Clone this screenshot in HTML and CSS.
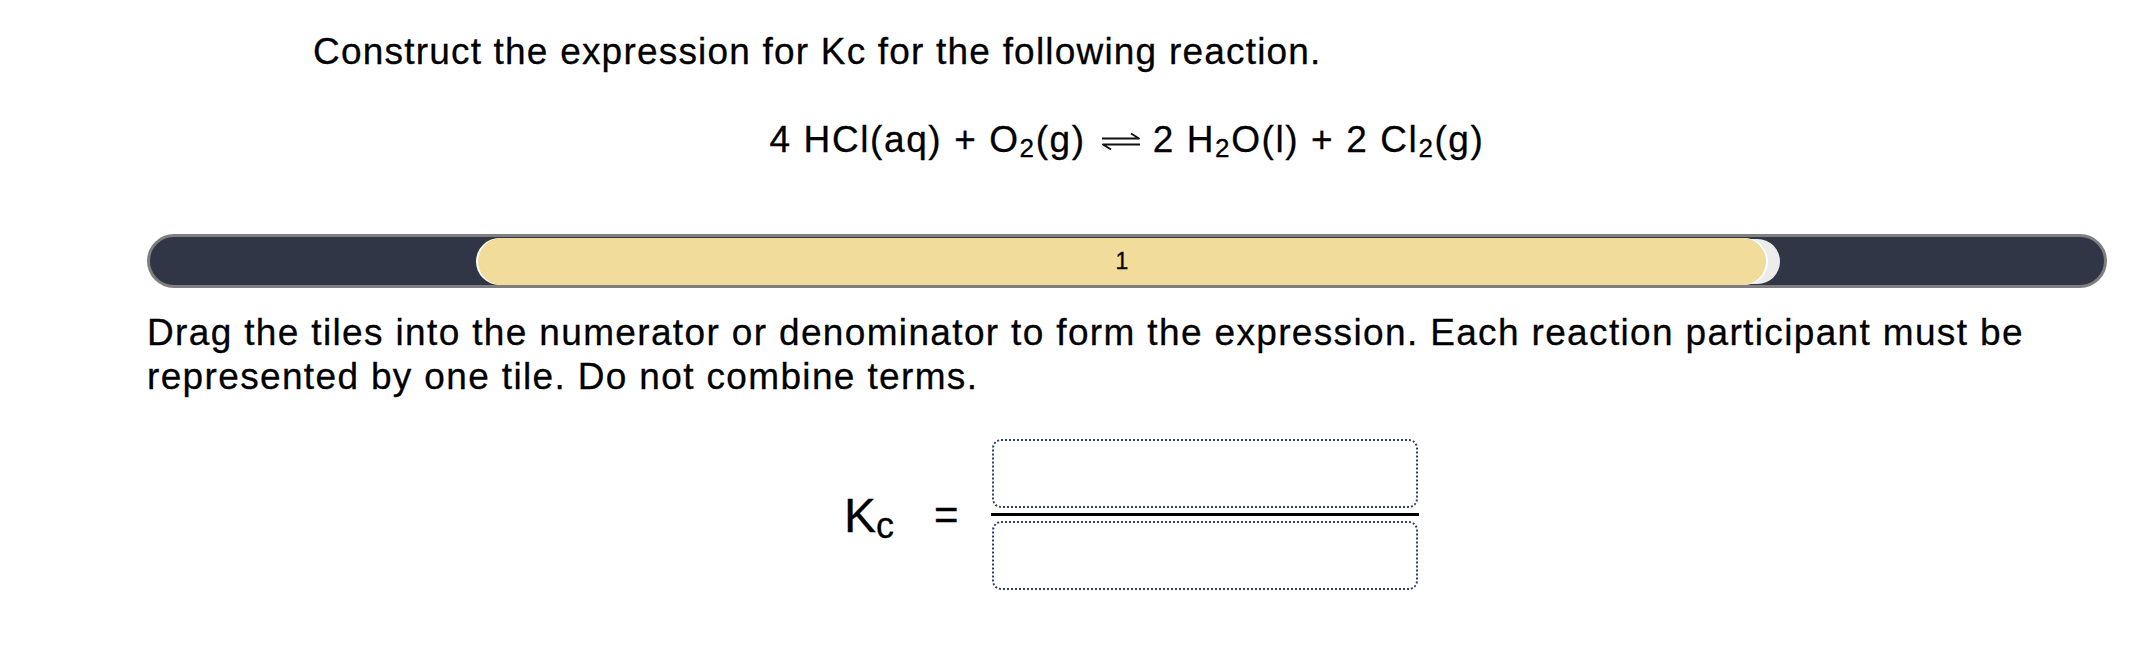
FILE: index.html
```html
<!DOCTYPE html>
<html lang="en">
<head>
<meta charset="utf-8">
<title>Kc expression</title>
<link rel="stylesheet" href="styles.css">
</head>
<body>
<div class="page">
  <p class="title">Construct the expression for Kc for the following reaction.</p>
  <p class="equation">4 HCl(aq) + O<span class="sub">2</span>(g)<svg class="arrow" width="38" height="20" viewBox="0 0 38 20"><path d="M0 7.5H37L29 2.5M38 13.5H1L9 18.5" fill="none" stroke="#111" stroke-width="1.9" stroke-linejoin="round"/></svg>2 H<span class="sub">2</span>O(l) + 2 Cl<span class="sub">2</span>(g)</p>

  <div class="track">
    <div class="slot">1</div>
  </div>

  <p class="instructions">Drag the tiles into the numerator or denominator to form the expression. Each reaction participant must be represented by one tile. Do not combine terms.</p>

  <div class="expr">
    <div class="kc">K<span class="kc-sub">c</span></div>
    <div class="eq">=</div>
    <div class="fraction">
      <div class="dropbox"></div>
      <div class="bar"></div>
      <div class="dropbox"></div>
    </div>
  </div>
</div>
</body>
</html>
```

FILE: styles.css
```css
html, body {
  margin: 0;
  padding: 0;
  background: #ffffff;
}

body {
  font-family: "Liberation Sans", Arial, Helvetica, sans-serif;
  color: #000;
  -webkit-text-stroke: 0.3px #000;
}

.page {
  width: 1960px;
  margin-left: 147px;
  padding-top: 31px;
}

.title,
.equation,
.instructions {
  margin: 0;
  font-size: 37px;
  line-height: 42px;
  letter-spacing: 1.2px;
}

.title {
  margin-left: 166px;
}

.equation {
  margin-top: 46px;
  text-align: center;
  white-space: nowrap;
  letter-spacing: 1.6px;
}

.sub {
  font-size: 26px;
  vertical-align: -5px;
  line-height: 0;
}

.arrow {
  vertical-align: 1px;
  margin: 0 13px 0 16px;
}

.track {
  margin-top: 73px;
  height: 48px;
  border: 3px solid #7f7f7f;
  border-radius: 30px;
  background: #303646;
  padding-left: 328px;
  display: flex;
  align-items: center;
}

.slot {
  width: 1288px;
  height: 47px;
  margin-top: 1px;
  border-radius: 24px;
  background: #f1dc9b;
  box-shadow: 2px 0 0 #ffffff, 15px 0 0 -1px #ececec, -2px 0 0 #ffffff;
  display: flex;
  align-items: center;
  justify-content: center;
  font-size: 23px;
  color: #000;
}

.instructions {
  margin-top: 23px;
  line-height: 44px;
  letter-spacing: 1.35px;
}

.expr {
  margin-top: 40px;
  margin-left: 697px;
  display: flex;
  align-items: flex-start;
}

.kc {
  margin-top: 53px;
  font-size: 48px;
  line-height: 48px;
}

.kc-sub {
  font-size: 36px;
  vertical-align: -6px;
  line-height: 0;
}

.eq {
  margin-top: 55px;
  margin-left: 40px;
  font-size: 42px;
  line-height: 42px;
}

.fraction {
  margin-left: 32px;
  width: 428px;
  display: flex;
  flex-direction: column;
  align-items: center;
}

.dropbox {
  width: 426px;
  height: 69px;
  box-sizing: border-box;
  border: 2px dotted #2c4266;
  border-radius: 9px;
}

.bar {
  width: 428px;
  height: 3px;
  background: #000;
  margin: 5px 0 5px;
}
```
